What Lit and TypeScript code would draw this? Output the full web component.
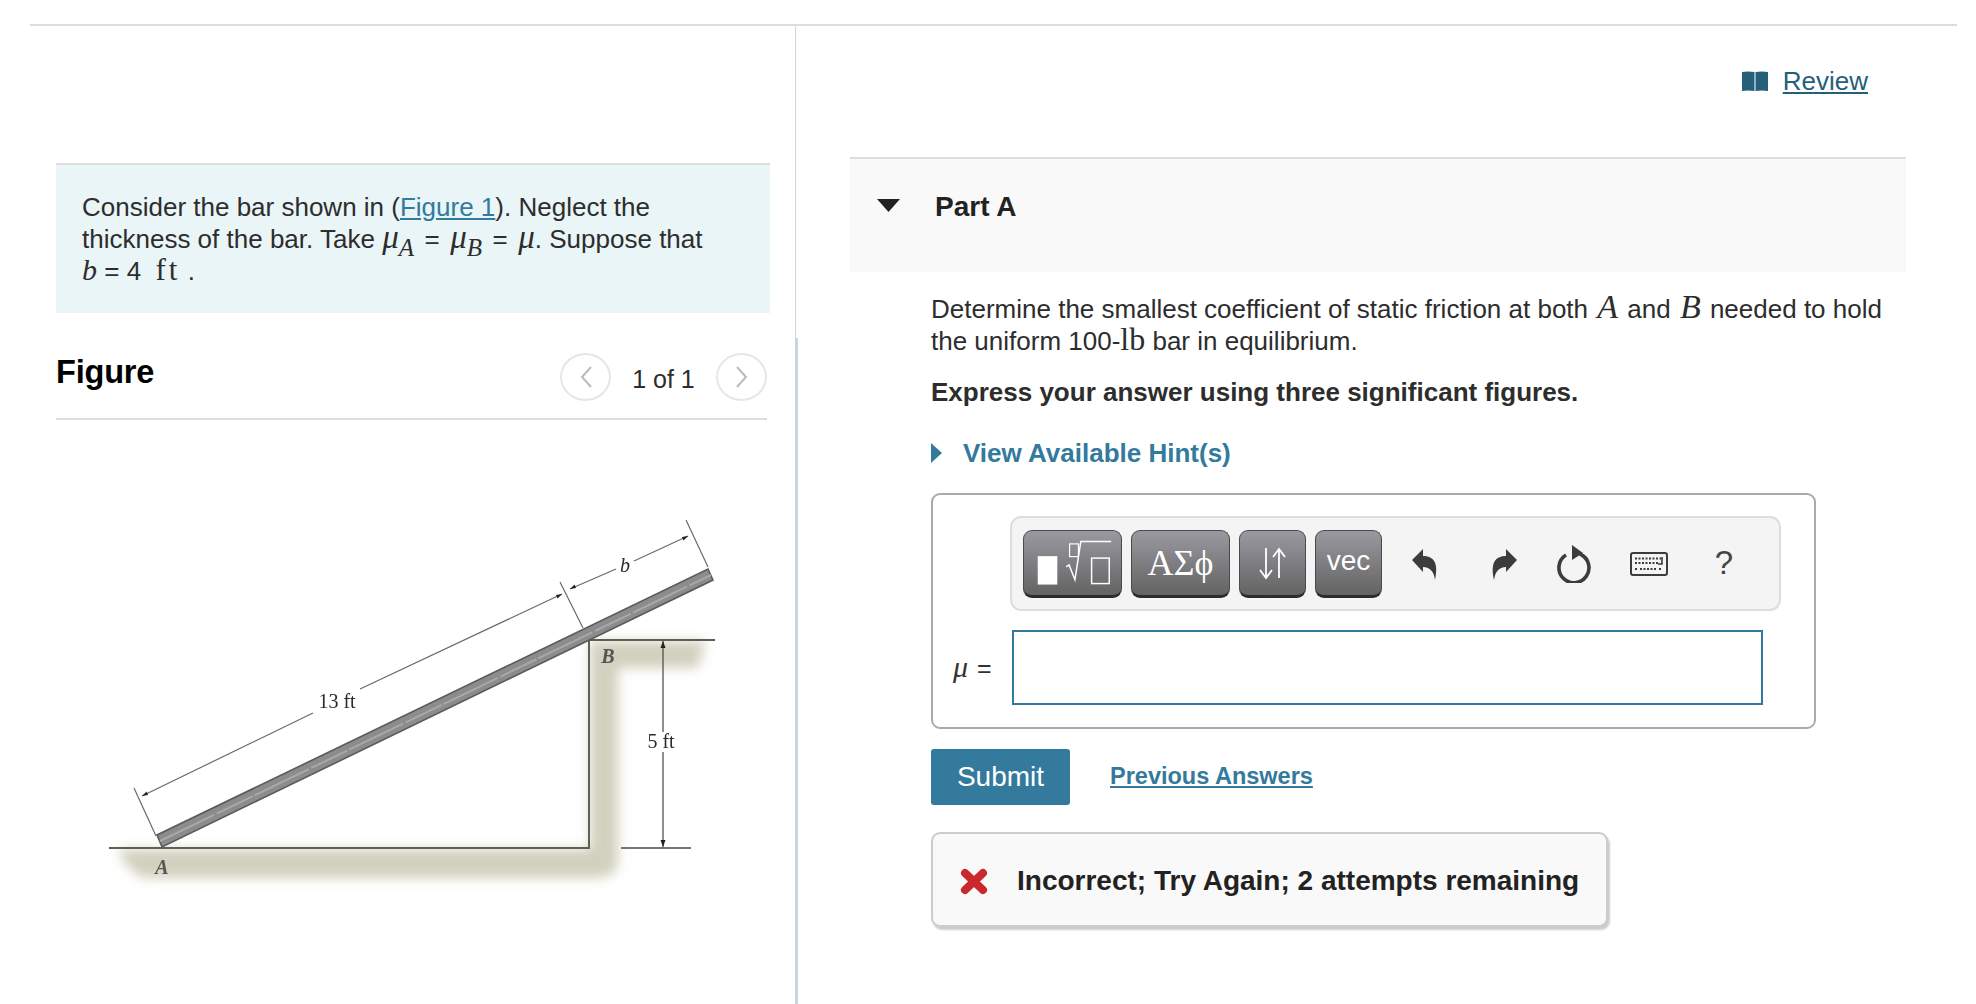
import { LitElement, html, css, svg } from "lit";
import { customElement } from "lit/decorators.js";

const diagram = svg`
  <defs>
    <filter id="blur" x="-10%" y="-10%" width="120%" height="120%"><feGaussianBlur stdDeviation="6"/></filter>
    <filter id="soft" x="-5%" y="-5%" width="110%" height="110%"><feGaussianBlur stdDeviation="0.5"/></filter>
  </defs>
  <g transform="translate(-100 -510)">
    <path d="M118 849H590V641H706L698 668H618V862Q618 876 598 878H146Q128 874 118 849Z" fill="#d2d0be" filter="url(#blur)"/>
    <g filter="url(#soft)">
      <path d="M109 848H589V640H715" fill="none" stroke="#5f5f54" stroke-width="2"/>
      <path d="M621 848H691" stroke="#77776c" stroke-width="1.800" fill="none"/>
      <path d="M663 641V732M663 752V847" stroke="#444" stroke-width="1.200" fill="none"/>
      <path d="M663 641l-2.500 7h5zM663 847l-2.500 -7h5z" fill="#222"/>
      <polygon points="157,835 162,847 713,580 708,569" fill="#8c8c8c" stroke="#5a5a5e" stroke-width="1.600"/>
      <path d="M160 841L711 575" stroke="#a8a8a8" stroke-width="2" stroke-dasharray="60 3 40 2"/>
      <g stroke="#6a6a6a" stroke-width="1.200" fill="none">
        <path d="M134 788L156 836M560 582L583 628M686 520L708 567"/>
        <path d="M142 796L313 713M360 689L562 594M570 589L616 569M634 561L688 536"/>
      </g>
      <path d="M142 796l6 -1 -1.500 -3.500zM562 594l-6 1 1.500 3.500zM570 589l6 -1 -1.500 -3.500zM688 536l-6 1 1.500 3.500z" fill="#222"/>
      <g fill="#2a2a2a" font-family="'Liberation Serif',serif" font-size="20" text-anchor="middle">
        <text x="337" y="708">13 ft</text>
        <text x="661" y="748">5 ft</text>
        <text x="625" y="572" font-style="italic">b</text>
        <text x="162" y="874" font-style="italic" font-weight="bold" fill="#555">A</text>
        <text x="608" y="663" font-style="italic" font-weight="bold" fill="#555">B</text>
      </g>
    </g>
  </g>`;

@customElement("app-root")
export class AppRoot extends LitElement {
  static styles = css`
    :host { display: block; height: 1004px; overflow: hidden; background: #fff; color: #2d2d2d;
      font-family: "Liberation Sans", Arial, sans-serif; font-size: 26px; line-height: 32px; }
    a { color: #337a9c; text-decoration: underline; }
    .page { margin: 24px 19px 0 30px; border-top: 2px solid #ddd; display: flex; height: 978px; }
    .left { width: 765px; flex: none; padding: 137px 25px 0 26px; box-sizing: border-box; }
    .divider { width: 3px; flex: none; background: linear-gradient(to bottom, #fff 0 312px, #c5d7e4 312px); border-left: 1px solid #c5d7e4; box-sizing: border-box; }
    .right { flex: 1; min-width: 0; }
    .intro { width: 714px; height: 150px; box-sizing: border-box; background: #eaf5f7; border-top: 2px solid #ddd; padding: 26px 26px 0; }
    .m { font-family: "Liberation Serif", serif; font-style: italic; font-size: 30px; line-height: 0; }
    .mu { font-family: "Liberation Serif", serif; font-style: italic; font-size: 33px; line-height: 0; }
    .cap { font-family: "Liberation Serif", serif; font-style: italic; font-size: 34px; line-height: 0; margin: 0 2px; }
    .eq { margin: 0 10.500px; }
    .n { font-family: "Liberation Serif", serif; font-size: 32px; line-height: 0; }
    .u { font-family: "Liberation Serif", serif; font-size: 31px; letter-spacing: 3px; line-height: 0; }
    sub { font-size: 25px; line-height: 0; }
    .fighead { display: flex; align-items: flex-start; height: 87px; margin-top: 18px; border-bottom: 2px solid #ddd; width: 711px; }
    h2 { margin: 0; font-size: 32.500px; line-height: 40px; font-weight: bold; color: #000; flex: 1; margin-top: 21px; letter-spacing: -.2px; }
    .pager { display: flex; align-items: center; margin-top: 22px; }
    .circ { width: 51px; height: 48px; border: 2px solid #e6e6e6; border-radius: 50%; box-sizing: border-box; display: flex; align-items: center; justify-content: center; }
    .count { width: 105px; text-align: center; font-size: 25px; padding-top: 4px; }
    .figure { display: block; margin: 90px 0 0 44px; }
    .reviewrow { display: flex; justify-content: flex-end; padding: 39px 89px 0 0; height: 92px; box-sizing: content-box; }
    .review { color: #25607a; display: flex; align-items: center; height: 32px; text-decoration: underline; }
    .review svg { margin-right: 15px; }
    .part { margin-left: 52px; width: 1056px; height: 115px; box-sizing: border-box; background: #f9f9f9; border-top: 2px solid #ddd; display: flex; padding: 31px 0 0 27px; }
    .part h3 { margin: 0 0 0 35px; font-size: 28px; font-weight: bold; line-height: 33px; color: #222; }
    .body { margin-left: 133px; width: 960px; padding-top: 21px; }
    p { margin: 0; }
    .strong { font-weight: bold; margin-top: 19px; }
    .hint { display: flex; align-items: center; margin-top: 29px; color: #337a9c; font-weight: bold; }
    .hint svg { margin-right: 21px; }
    .answer { margin-top: 24px; width: 885px; height: 236px; border: 2px solid #aaa; border-radius: 9px; box-sizing: border-box; padding: 21px 0 0 77px; }
    .toolbar { width: 771px; height: 95px; background: #f4f4f4; border: 2px solid #ddd; border-radius: 11px; box-sizing: border-box; display: flex; align-items: center; padding: 0 0 0 11px; }
    .btn { height: 68px; box-sizing: border-box; border: 1px solid #4a4a4a; border-bottom: 3px solid #2c2c2c; border-radius: 9px; background: linear-gradient(#9a99a1, #636363); color: #fff; display: flex; align-items: center; justify-content: center; margin-right: 9px; }
    .w1 { width: 99px; } .w2 { width: 99px; } .w3 { width: 67px; } .w4 { width: 67px; margin-right: 0; }
    .greek { font-family: "Liberation Serif", serif; font-size: 36px; }
    .vec { font-size: 28px; padding-bottom: 3px; }
    .ic { flex: none; display: flex; justify-content: center; width: 40px; }
    .i1 { margin-left: 23px; } .i2 { margin-left: 39px; } .i3 { margin-left: 30px; } .i4 { margin-left: 35px; } .i5 { margin-left: 35px; font-size: 33px; color: #444; padding-bottom: 2px; }
    .row { display: flex; align-items: center; margin: 19px 0 0 -57px; }
    .lab { width: 59px; font-size: 25px; color: #333; letter-spacing: 1px; white-space: nowrap; }
    .input { width: 751px; height: 75px; border: 2px solid #337a9c; box-sizing: border-box; }
    .actions { display: flex; align-items: center; margin-top: 20px; }
    .submit { width: 139px; height: 56px; border-radius: 3px; background: #337a9c; color: #fff; display: flex; align-items: center; justify-content: center; font-size: 28px; margin-right: 40px; }
    .prev { font-weight: bold; font-size: 23.500px; padding-bottom: 2px; }
    .fb { margin-top: 27px; width: 677px; height: 95px; box-sizing: border-box; background: #f9f9f9; border: 2px solid #ccc; border-radius: 9px; box-shadow: 2px 3px 2px #ccc; display: flex; align-items: center; padding: 3px 0 0 27px; font-size: 28px; font-weight: bold; color: #222; }
    .fb svg { margin-right: 29px; }
  `;

  render() {
    return html`<div class="page">
      <div class="left">
        <div class="intro">Consider the bar shown in (<a href="#">Figure 1</a>). Neglect the<br />thickness of the bar. Take <span class="mu">μ<sub>A</sub></span><span class="eq">=</span><span class="mu">μ<sub>B</sub></span><span class="eq">=</span><span class="mu">μ</span>. Suppose that<br /><span class="m">b</span> = 4 &nbsp;<span class="u">ft</span> .</div>
        <div class="fighead">
          <h2>Figure</h2>
          <div class="pager">
            <div class="circ"><svg width="14" height="24" viewBox="0 0 14 24"><path d="M12 2L3 12l9 10" fill="none" stroke="#bbb" stroke-width="2"/></svg></div>
            <div class="count">1 of 1</div>
            <div class="circ"><svg width="14" height="24" viewBox="0 0 14 24"><path d="M2 2l9 10L2 22" fill="none" stroke="#bbb" stroke-width="2"/></svg></div>
          </div>
        </div>
        <svg class="figure" width="630" height="380" viewBox="0 0 630 380">${diagram}</svg>
      </div>
      <div class="divider"></div>
      <div class="right">
        <div class="reviewrow">
          <a class="review" href="#"><svg width="26" height="21" viewBox="0 0 26 21"><path d="M0 1Q6 0 12.500 1V20Q6 19 0 20ZM13.500 1Q20 0 26 1V20Q20 19 13.500 20Z" fill="#25607a"/></svg>Review</a>
        </div>
        <div class="part">
          <svg width="23" height="13" viewBox="0 0 23 13" style="margin-top:9px"><path d="M0 0H23L11.500 13Z" fill="#222"/></svg>
          <h3>Part A</h3>
        </div>
        <div class="body">
          <p>Determine the smallest coefficient of static friction at both <span class="cap">A</span> and <span class="cap">B</span> needed to hold<br />the uniform 100-<span class="n">lb</span> bar in equilibrium.</p>
          <p class="strong">Express your answer using three significant figures.</p>
          <div class="hint"><svg width="11" height="20" viewBox="0 0 11 20"><path d="M0 0L11 10L0 20Z" fill="#337a9c"/></svg>View Available Hint(s)</div>
          <div class="answer">
            <div class="toolbar">
              <div class="btn w1"><svg width="99" height="64" viewBox="0 0 99 64"><rect x="14" y="25" width="20" height="29" fill="#fff"/><rect x="46.500" y="12.500" width="9" height="13" fill="none" stroke="#fff" stroke-width="1.200"/><path d="M43 36l3 -2 6 15 6 -39h31" fill="none" stroke="#fff" stroke-width="1.500"/><rect x="69" y="27" width="18" height="26" fill="none" stroke="#fff" stroke-width="1.500"/></svg></div>
              <div class="btn w2 greek">ΑΣϕ</div>
              <div class="btn w3"><svg width="40" height="34" viewBox="0 0 40 34"><path d="M13 2V31M7 24l6 8 6-8M26 32V3M20 11l6-8 6 8" fill="none" stroke="#fff" stroke-width="1.800"/></svg></div>
              <div class="btn w4 vec">vec</div>
              <div class="ic i1"><svg width="28" height="32" viewBox="0 0 28 32"><path d="M1 12L12 1V8C22 8 28 14 24 32C23 24 19 19 12 19V24Z" fill="#3c3c3c"/></svg></div>
              <div class="ic i2"><svg width="28" height="32" viewBox="0 0 28 32"><path d="M27 12L16 1V8C6 8 0 14 4 32C5 24 9 19 16 19V24Z" fill="#3c3c3c"/></svg></div>
              <div class="ic i3"><svg width="36" height="38" viewBox="0 0 36 38"><path d="M10 10A15 15 0 1 0 24 9" fill="none" stroke="#3c3c3c" stroke-width="3.600"/><path d="M16 0L27 8 16 15Z" fill="#3c3c3c"/></svg></div>
              <div class="ic i4"><svg width="38" height="24" viewBox="0 0 38 24"><rect x="1" y="1" width="36" height="22" rx="2" fill="#f4f4f4" stroke="#3c3c3c" stroke-width="2"/><path d="M5 6.500h26M5 11h24M10 17h17M5 17h3M29 17h3" stroke="#3c3c3c" stroke-width="2.200" stroke-dasharray="2 1.500" fill="none"/><path d="M32 5V12H28" stroke="#3c3c3c" stroke-width="1.600" fill="none"/></svg></div>
              <div class="ic i5">?</div>
            </div>
            <div class="row">
              <div class="lab"><span class="m">μ</span> =</div>
              <div class="input"></div>
            </div>
          </div>
          <div class="actions">
            <div class="submit">Submit</div>
            <a class="prev" href="#">Previous Answers</a>
          </div>
          <div class="fb">
            <svg width="28" height="27" viewBox="0 0 28 27"><path d="M5 5L23 22M23 5L5 22" stroke="#c9282d" stroke-width="8" stroke-linecap="round" fill="none"/></svg>
            Incorrect; Try Again; 2 attempts remaining
          </div>
        </div>
      </div>
    </div>`;
  }
}
